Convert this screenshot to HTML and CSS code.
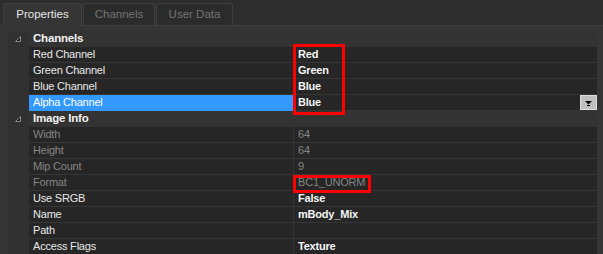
FILE: index.html
```html
<!DOCTYPE html>
<html lang="en">
<head>
  <meta charset="UTF-8">
  <meta name="viewport" content="width=device-width, initial-scale=1.0">
  <title>Properties</title>
  <link rel="stylesheet" href="styles.css">
</head>
<body>
  <div id="root">
    <!-- tab strip -->
    <div class="tabs">
      <div class="tab active">Properties</div>
      <div class="tab tab-ch">Channels</div>
      <div class="tab tab-ud">User Data</div>
    </div>
    <div class="panel">
      <div class="grid">
        <div class="cat">
          <div class="gutter"><svg class="exp" width="6" height="6" viewBox="0 0 6 6"><path d="M5.5 0.5 L5.5 5.5 L0.5 5.5 Z" fill="#1a1a1a" stroke="#8a8a8a" stroke-width="1"/></svg></div>
          <div class="cat-name">Channels</div>
        </div>
        <div class="row"><div class="gutter"></div><div class="name">Red Channel</div><div class="val">Red</div></div>
        <div class="row"><div class="gutter"></div><div class="name">Green Channel</div><div class="val">Green</div></div>
        <div class="row"><div class="gutter"></div><div class="name">Blue Channel</div><div class="val">Blue</div></div>
        <div class="row"><div class="gutter"></div><div class="name sel">Alpha Channel</div><div class="val">Blue<span class="drop"><svg width="9" height="6" viewBox="0 0 9 6"><path d="M1 1 H8 L4.5 4.5 Z" fill="#000"/><rect x="3" y="5" width="3" height="1" fill="#000"/></svg></span></div></div>
        <div class="cat">
          <div class="gutter"><svg class="exp" width="6" height="6" viewBox="0 0 6 6"><path d="M5.5 0.5 L5.5 5.5 L0.5 5.5 Z" fill="#1a1a1a" stroke="#8a8a8a" stroke-width="1"/></svg></div>
          <div class="cat-name">Image Info</div>
        </div>
        <div class="row off"><div class="gutter"></div><div class="name">Width</div><div class="val">64</div></div>
        <div class="row off"><div class="gutter"></div><div class="name">Height</div><div class="val">64</div></div>
        <div class="row off"><div class="gutter"></div><div class="name">Mip Count</div><div class="val">9</div></div>
        <div class="row off"><div class="gutter"></div><div class="name">Format</div><div class="val">BC1_UNORM</div></div>
        <div class="row"><div class="gutter"></div><div class="name">Use SRGB</div><div class="val">False</div></div>
        <div class="row"><div class="gutter"></div><div class="name">Name</div><div class="val">mBody_Mix</div></div>
        <div class="row"><div class="gutter"></div><div class="name">Path</div><div class="val"></div></div>
        <div class="row"><div class="gutter"></div><div class="name">Access Flags</div><div class="val">Texture</div></div>
      </div>
    </div>
    <!-- red highlight boxes -->
    <div class="mark mark-ch"></div>
    <div class="mark mark-fmt"></div>
  </div>
</body>
</html>
```

FILE: styles.css
```css
body{
  margin: 0;
  padding: 0;
  background-color: #2d2d2d;
  font-family: "Liberation Sans", Arial, sans-serif;
  font-size: 11px;
}
#root{
  width: 603px;
  height: 254px;
  overflow: hidden;
  position: relative;
}
.tabs{
  height: 26px;
  display: flex;
  align-items: flex-end;
  padding-left: 3px;
  gap: 1px;
  box-sizing: border-box;
  border-bottom: 1px solid #3f3f3f;
}
.tab{
  width: 79px;
  height: 22px;
  box-sizing: border-box;
  border: 1px solid #404040;
  border-bottom: none;
  border-radius: 3px 3px 0 0;
  background-color: #2b2b2b;
  color: #737373;
  font-size: 11.5px;
  text-align: center;
  line-height: 21px;
}
.tab.active{
  background-color: #353535;
  color: #e6e6e6;
  height: 23px;
  margin-bottom: -1px;
}
.tab-ch{
  width: 72px;
}
.tab-ud{
  width: 77px;
}
.panel{
  height: 228px;
  background-color: #353535;
  padding: 5px 6px 0 8px;
  box-sizing: border-box;
}
.grid{
  display: flex;
  flex-direction: column;
}
.cat, .row{
  display: flex;
  height: 16px;
  line-height: 15px;
  letter-spacing: -0.2px;
}
.cat{
  background-color: #333333;
}
.gutter{
  width: 21px;
  flex-shrink: 0;
  background-color: #313131;
  display: flex;
  align-items: center;
  justify-content: flex-end;
  padding-right: 8px;
  box-sizing: border-box;
}
.exp{
  display: block;
}
.cat-name{
  padding-left: 4px;
  font-weight: bold;
  color: #f2f2f2;
  font-size: 11.5px;
}
.name{
  width: 265px;
  flex-shrink: 0;
  box-sizing: border-box;
  padding-left: 4px;
  background-color: #262626;
  border-bottom: 1px solid #363636;
  border-right: 1px solid #363636;
  color: #e8e8e8;
}
.name.sel{
  background-color: #3399ff;
  border-bottom-color: #3399ff;
  color: #ffffff;
}
.val{
  flex: 1;
  display: flex;
  justify-content: space-between;
  align-items: flex-start;
  padding-left: 4px;
  background-color: #262626;
  border-bottom: 1px solid #363636;
  color: #f5f5f5;
  font-weight: bold;
}
.row.off .name, .row.off .val{
  color: #858585;
  font-weight: normal;
}
.drop{
  width: 17px;
  height: 15px;
  box-sizing: border-box;
  border: 1px solid #dcdcdc;
  background-color: #c0c0c0;
  display: flex;
  align-items: center;
  justify-content: center;
}
.drop svg{
  display: block;
}
.mark{
  position: absolute;
  border: 3px solid #ff0000;
  box-sizing: border-box;
}
.mark-ch{
  left: 293px;
  top: 44px;
  width: 52px;
  height: 71px;
}
.mark-fmt{
  left: 293px;
  top: 175px;
  width: 78px;
  height: 18px;
}
```
